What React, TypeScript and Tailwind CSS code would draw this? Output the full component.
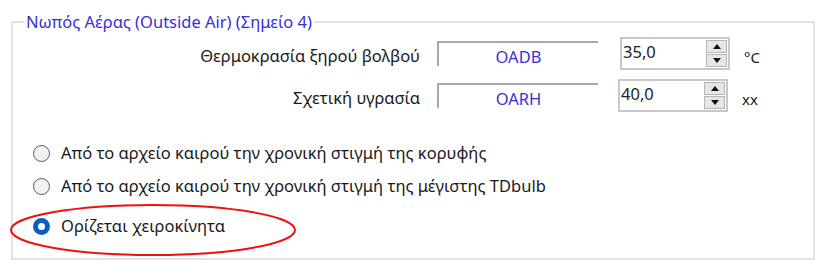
import React from 'react'

const font = { fontFamily: '"Noto Sans", "Open Sans", sans-serif' }

interface FieldRowProps {
  label: string
  code: string
  value: string
  unit: string
  spinShift?: string
}

// Spin control: numeric text with up/down buttons on the right
const SpinBox: React.FC<{ value: string; className?: string }> = ({ value, className }) => (
  <div className={`flex h-[33px] w-[110px] border-2 border-[#c8c8c8] bg-white ${className ?? ''}`}>
    <div className="flex-1 pl-[1px] pt-[2px] text-[16.5px] leading-[22px] text-[#222]">{value}</div>
    <div className="mr-[1px] my-[1px] flex w-[21px] flex-col gap-[1px]">
      <div className="flex flex-1 items-center justify-center border border-[#b6b6b6] bg-[#e6e6e6]">
        <svg width="8" height="5" viewBox="0 0 8 5"><path d="M0 5 L4 0 L8 5 Z" fill="#111" /></svg>
      </div>
      <div className="flex flex-1 items-center justify-center border border-[#b6b6b6] bg-[#e6e6e6]">
        <svg width="8" height="5" viewBox="0 0 8 5"><path d="M0 0 L8 0 L4 5 Z" fill="#111" /></svg>
      </div>
    </div>
  </div>
)

const FieldRow: React.FC<FieldRowProps> = ({ label, code, value, unit, spinShift }) => (
  <div className="flex h-[33px] items-start">
    <div className="w-[396px] pt-[8px] text-right text-[16.5px] leading-[22px] text-[#1a1a1a]">{label}</div>
    <div className="ml-[17px] mt-[4px] flex h-[25px] w-[161px] items-center justify-center border-l-2 border-t-2 border-[#a8a8a8] pt-[5px] text-[16.5px] text-[#3a2fd6]">
      {code}
    </div>
    <SpinBox value={value} className={spinShift} />
    <div className="ml-[14px] pt-[9px] text-[15px] leading-[22px] text-[#1a1a1a]">{unit}</div>
  </div>
)

// Radio option in the Windows style
const Radio: React.FC<{ label: string; checked?: boolean; className?: string }> = ({ label, checked, className }) => (
  <div className={`flex h-[20px] items-center gap-[11px] ${className ?? ''}`}>
    {checked ? (
      <div className="flex h-[17px] w-[17px] items-center justify-center rounded-full bg-[#0a5fc0]">
        <div className="h-[7px] w-[7px] rounded-full bg-white" />
      </div>
    ) : (
      <div className="h-[17px] w-[17px] rounded-full border border-[#5a5a5a] bg-[#f2f2f2]" />
    )}
    <span className="text-[16.5px] leading-[22px] text-[#1a1a1a]">{label}</span>
  </div>
)

export default function App() {
  return (
    <div className="relative h-[280px] w-[831px] bg-white pl-[11px] pt-[12px]" style={font}>
      <fieldset className="h-[248px] w-[804px] border-2 border-[#e3e3e3] pl-[11px]">
        <legend className="px-[2px] text-[16.5px] leading-[20px] text-[#3a2fd6]">
          Νωπός Αέρας (Outside Air) (Σημείο 4)
        </legend>
        <div className="mt-[5px] flex flex-col gap-[9px]">
          <FieldRow label="Θερμοκρασία ξηρού βολβού" code="OADB" value="35,0" unit="°C" spinShift="ml-[22px]" />
          <FieldRow label="Σχετική υγρασία" code="OARH" value="40,0" unit="xx" spinShift="ml-[20px]" />
        </div>
        <div className="flex flex-col pl-[9px]">
          <Radio className="mt-[31px]" label="Από το αρχείο καιρού την χρονική στιγμή της κορυφής" />
          <Radio className="mt-[13px]" label="Από το αρχείο καιρού την χρονική στιγμή της μέγιστης TDbulb" />
          <Radio className="mt-[20px]" label="Ορίζεται χειροκίνητα" checked />
        </div>
      </fieldset>
      {/* red annotation ellipse drawn over the form */}
      <svg className="pointer-events-none absolute left-0 top-0" width="831" height="280">
        <ellipse cx="153" cy="230" rx="142" ry="25" fill="none" stroke="#ee1111" strokeWidth="2" />
      </svg>
    </div>
  )
}
